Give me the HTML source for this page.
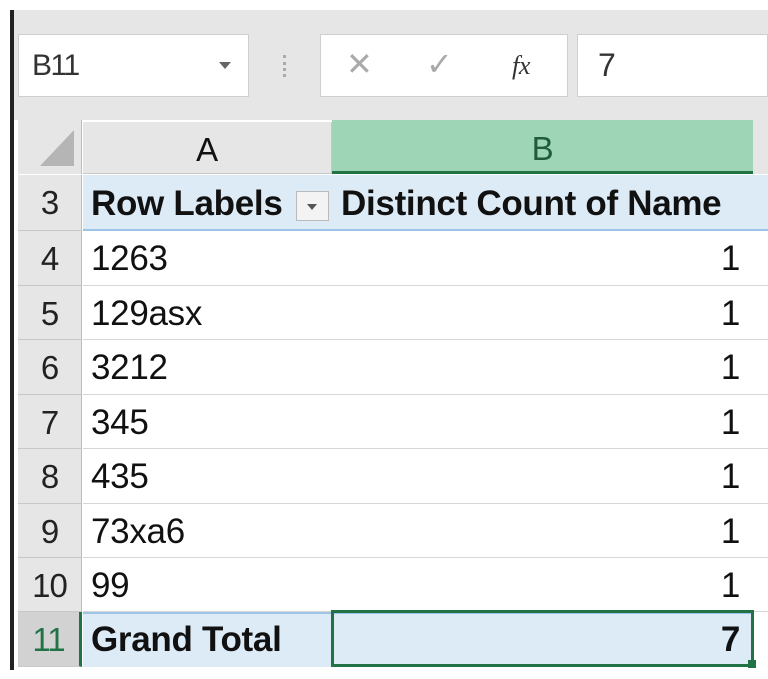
<!DOCTYPE html>
<html><head><style>
*{margin:0;padding:0;box-sizing:border-box}
body{width:768px;height:679px;background:#fff;position:relative;overflow:hidden;font-family:"Liberation Sans",sans-serif}
.a{position:absolute}
.t{font-size:35px;letter-spacing:-0.3px;color:#111;line-height:56px}
.rh{left:18px;width:64px;text-align:center;background:#e6e6e6;border-bottom:1px solid #c8c8c8;border-right:1px solid #bdbdbd;color:#222;font-size:33px;line-height:56px;letter-spacing:-1px}
.row{left:83px;width:685px;border-bottom:1px solid #d6d6d6}
.v{right:28px}
</style></head><body>
<div class="a" style="left:13px;top:10px;width:755px;height:110px;background:#e6e6e6"></div>
<div class="a" style="left:10px;top:10px;width:4px;height:660px;background:#222"></div>
<div class="a" style="left:18px;top:34px;width:231px;height:63px;background:#fff;border:1px solid #cfcfcf"></div>
<div class="a t" style="left:32px;top:38px;color:#333;font-size:30px;letter-spacing:-1.5px">B11</div>
<div class="a" style="left:219px;top:62px;width:0;height:0;border-left:6px solid transparent;border-right:6px solid transparent;border-top:7px solid #666"></div>
<div class="a" style="left:283px;top:55px;width:3px;height:22px;border-left:3px dotted #aaa"></div>
<div class="a" style="left:320px;top:34px;width:248px;height:63px;background:#fff;border:1px solid #cfcfcf"></div>
<div class="a t" style="left:346px;top:36px;color:#aaa;font-size:32px">✕</div>
<div class="a t" style="left:426px;top:36px;color:#aaa;font-size:32px">✓</div>
<div class="a t" style="left:512px;top:38px;color:#333;font-family:'Liberation Serif';font-style:italic;font-size:26px">fx</div>
<div class="a" style="left:577px;top:34px;width:191px;height:63px;background:#fff;border:1px solid #cfcfcf"></div>
<div class="a t" style="left:598px;top:37px;color:#333;font-size:32px">7</div>
<div class="a" style="left:18px;top:120px;width:64px;height:54px;background:#e6e6e6;border-right:1px solid #bdbdbd"></div>
<div class="a" style="left:40px;top:130px;width:0;height:0;border-left:34px solid transparent;border-bottom:36px solid #b5b5b5"></div>
<div class="a t" style="left:83px;top:122px;width:249px;height:52px;background:#e6e6e6;text-align:center;border-right:1px solid #c8c8c8;border-bottom:1px solid #c8c8c8;font-size:33px;line-height:56px">A</div>
<div class="a t" style="left:332px;top:120px;width:421px;height:54px;background:#9fd5b7;text-align:center;border-bottom:3px solid #217346;color:#1e5c3a;font-size:33px;line-height:58px">B</div>
<div class="a" style="left:753px;top:120px;width:15px;height:54px;background:#e6e6e6"></div>

<div class="a row" style="top:175px;height:56px;background:#ddebf7;border-bottom:2px solid #9dc3e6"></div>
<div class="a t" style="left:91px;top:176px;font-weight:bold">Row Labels</div>
<div class="a" style="left:296px;top:191px;width:33px;height:30px;background:#f3f3f3;border:1px solid #bbb"></div>
<div class="a" style="left:307px;top:204px;border-left:5px solid transparent;border-right:5px solid transparent;border-top:6px solid #555"></div>
<div class="a t" style="left:341px;top:176px;font-weight:bold">Distinct Count of Name</div>
<div class="a rh" style="top:175px;height:56px">3</div>

<div class="a row" style="top:231px;height:55px"></div><div class="a rh" style="top:231px;height:55px">4</div>
<div class="a t" style="left:91px;top:231px">1263</div><div class="a t v" style="top:231px">1</div>
<div class="a row" style="top:286px;height:54px"></div><div class="a rh" style="top:286px;height:54px">5</div>
<div class="a t" style="left:91px;top:286px">129asx</div><div class="a t v" style="top:286px">1</div>
<div class="a row" style="top:340px;height:55px"></div><div class="a rh" style="top:340px;height:55px">6</div>
<div class="a t" style="left:91px;top:340px">3212</div><div class="a t v" style="top:340px">1</div>
<div class="a row" style="top:395px;height:54px"></div><div class="a rh" style="top:395px;height:54px">7</div>
<div class="a t" style="left:91px;top:395px">345</div><div class="a t v" style="top:395px">1</div>
<div class="a row" style="top:449px;height:55px"></div><div class="a rh" style="top:449px;height:55px">8</div>
<div class="a t" style="left:91px;top:449px">435</div><div class="a t v" style="top:449px">1</div>
<div class="a row" style="top:504px;height:54px"></div><div class="a rh" style="top:504px;height:54px">9</div>
<div class="a t" style="left:91px;top:504px">73xa6</div><div class="a t v" style="top:504px">1</div>
<div class="a row" style="top:558px;height:54px"></div><div class="a rh" style="top:558px;height:54px">10</div>
<div class="a t" style="left:91px;top:558px">99</div><div class="a t v" style="top:558px">1</div>

<div class="a" style="left:83px;top:612px;width:670px;height:55px;background:#ddebf7;border-top:2px solid #9dc3e6"></div>
<div class="a rh" style="top:612px;height:55px;background:#d2d2d2;color:#217346;border-right:3px solid #217346">11</div>
<div class="a t" style="left:91px;top:612px;font-weight:bold">Grand Total</div>
<div class="a" style="left:331px;top:610px;width:423px;height:57px;border:3px solid #217346"></div>
<div class="a t v" style="top:612px;font-weight:bold">7</div>
<div class="a" style="left:748px;top:660px;width:8px;height:8px;background:#217346"></div>
</body></html>
